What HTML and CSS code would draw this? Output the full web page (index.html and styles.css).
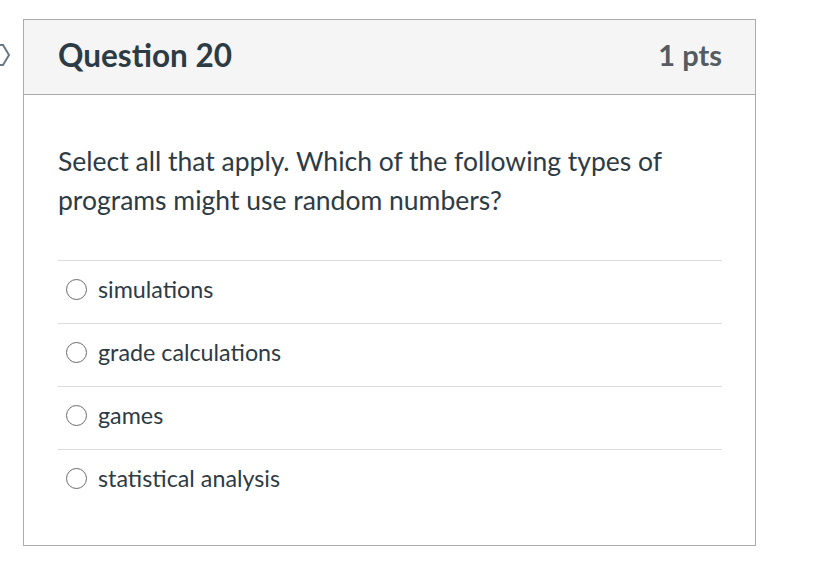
FILE: index.html
```html
<!DOCTYPE html>
<html>
<head>
<meta charset="utf-8">
<link rel="stylesheet" href="styles.css">
</head>
<body>
<div class="page">
  <svg class="nav-arrow" width="12" height="24" viewBox="0 0 12 24"><path d="M-4 2 L3 2 L9 12 L3 22 L-4 22" fill="none" stroke="#6b7780" stroke-width="2"/></svg>
  <div class="card">
    <div class="header">
      <h2 class="title">Question 20</h2>
      <span class="pts">1 pts</span>
    </div>
    <div class="body">
      <p class="question">Select all that apply. Which of the following types of programs might use random numbers?</p>
      <ul class="answers">
        <li class="answer"><span class="radio"></span><span class="label">simulations</span></li>
        <li class="answer"><span class="radio"></span><span class="label">grade calculations</span></li>
        <li class="answer"><span class="radio"></span><span class="label">games</span></li>
        <li class="answer"><span class="radio"></span><span class="label">statistical analysis</span></li>
      </ul>
    </div>
  </div>
</div>
</body>
</html>
```

FILE: styles.css
```css
html, body {
  margin: 0;
  padding: 0;
  background: #fff;
  font-family: Lato, "Liberation Sans", sans-serif;
}
.page {
  position: relative;
  padding: 19px 0 0 23px;
}
.nav-arrow {
  position: absolute;
  left: 0;
  top: 43px;
}
.card {
  width: 731px;
  height: 525px;
  border: 1px solid #ababab;
}
.header {
  box-sizing: border-box;
  height: 75px;
  background: #f5f5f5;
  border-bottom: 1px solid #ababab;
  display: flex;
  align-items: center;
  justify-content: space-between;
  padding: 0 33px 5px 34px;
}
.title {
  margin: 0;
  font-size: 31.5px;
  font-weight: 700;
  color: #2d3b45;
}
.pts {
  font-size: 29px;
  font-weight: 700;
  color: #555c61;
}
.body {
  padding: 0 33px 0 34px;
}
.question {
  margin: 47px 0 0 0;
  font-size: 26.5px;
  line-height: 39px;
  color: #2d3b45;
}
.answers {
  list-style: none;
  margin: 40px 0 0 0;
  padding: 0;
}
.answer {
  display: flex;
  align-items: center;
  gap: 11px;
  height: 62px;
  padding: 0 0 0 8px;
  border-top: 1px solid #dcdcdc;
  font-size: 23.3px;
  color: #2d3b45;
}
.label {
  margin-bottom: 6px;
}
.radio {
  width: 19px;
  height: 19px;
  border: 1px solid #6b6b6b;
  border-radius: 50%;
  flex: none;
  margin: 0 0 6px 0;
}
```
